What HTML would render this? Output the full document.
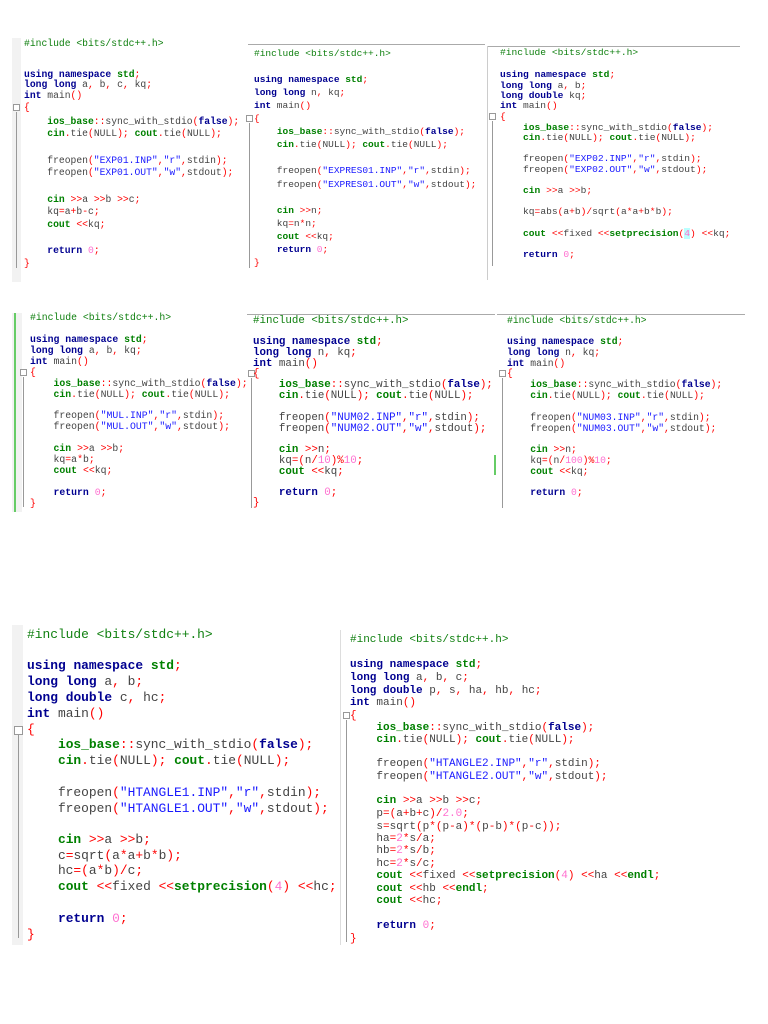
<!DOCTYPE html><html><head><meta charset="utf-8"><style>
body{margin:0;width:768px;height:1024px;background:#fff;position:relative;overflow:hidden}
.P{position:absolute;background:#fff;font-family:"Liberation Mono",monospace;color:#444}
.L{position:absolute;white-space:pre;line-height:1;left:0}
b.k{color:#000090;font-weight:bold}b.g{color:#008000;font-weight:bold}
i{font-style:normal;color:#f00}em{font-style:normal;color:#1a1aff}u{text-decoration:none;color:#ff70d0}
.pp{color:#108010}
.gut{position:absolute;background:#f2f2f2}
.vl{position:absolute;width:1px;background:#999}
.fb{position:absolute;width:7px;height:7px;border:1px solid #999;background:#fff;box-sizing:border-box}
.hl{position:absolute;height:1px;background:#aaa}
</style></head><body>

<!-- panel 1 -->
<div class="gut" style="left:12px;top:38px;width:9px;height:244px"></div>
<div class="fb" style="left:13px;top:104px"></div><div class="vl" style="left:16px;top:112px;height:156px"></div>
<div class="P" style="left:24px;top:0;font-size:9.7px">
<div class="L pp" style="top:39px">#include &lt;bits/stdc++.h&gt;</div>
<div class="L" style="top:70px"><b class=k>using</b> <b class=k>namespace</b> <b class=g>std</b><i>;</i></div>
<div class="L" style="top:80px"><b class=k>long</b> <b class=k>long</b> a<i>,</i> b<i>,</i> c<i>,</i> kq<i>;</i></div>
<div class="L" style="top:91px"><b class=k>int</b> main<i>()</i></div>
<div class="L" style="top:103px"><i>{</i></div>
<div class="L" style="top:117px">    <b class=g>ios_base</b><i>::</i>sync_with_stdio<i>(</i><b class=k>false</b><i>);</i></div>
<div class="L" style="top:129px">    <b class=g>cin</b><i>.</i>tie<i>(</i>NULL<i>);</i> <b class=g>cout</b><i>.</i>tie<i>(</i>NULL<i>);</i></div>
<div class="L" style="top:156px">    freopen<i>(</i><em>"EXP01.INP"</em><i>,</i><em>"r"</em><i>,</i>stdin<i>);</i></div>
<div class="L" style="top:168px">    freopen<i>(</i><em>"EXP01.OUT"</em><i>,</i><em>"w"</em><i>,</i>stdout<i>);</i></div>
<div class="L" style="top:195px">    <b class=g>cin</b> <i>&gt;&gt;</i>a <i>&gt;&gt;</i>b <i>&gt;&gt;</i>c<i>;</i></div>
<div class="L" style="top:207px">    kq<i>=</i>a<i>+</i>b<i>-</i>c<i>;</i></div>
<div class="L" style="top:220px">    <b class=g>cout</b> <i>&lt;&lt;</i>kq<i>;</i></div>
<div class="L" style="top:246px">    <b class=k>return</b> <u>0</u><i>;</i></div>
<div class="L" style="top:259px"><i>}</i></div>
</div>

<!-- panel 2 -->
<div class="hl" style="left:248px;top:44px;width:237px"></div>
<div class="fb" style="left:246px;top:115px"></div><div class="vl" style="left:249px;top:123px;height:145px"></div>
<div class="P" style="left:254px;top:0;font-size:9.5px">
<div class="L pp" style="top:49px">#include &lt;bits/stdc++.h&gt;</div>
<div class="L" style="top:75px"><b class=k>using</b> <b class=k>namespace</b> <b class=g>std</b><i>;</i></div>
<div class="L" style="top:88px"><b class=k>long</b> <b class=k>long</b> n<i>,</i> kq<i>;</i></div>
<div class="L" style="top:101px"><b class=k>int</b> main<i>()</i></div>
<div class="L" style="top:114px"><i>{</i></div>
<div class="L" style="top:127px">    <b class=g>ios_base</b><i>::</i>sync_with_stdio<i>(</i><b class=k>false</b><i>);</i></div>
<div class="L" style="top:140px">    <b class=g>cin</b><i>.</i>tie<i>(</i>NULL<i>);</i> <b class=g>cout</b><i>.</i>tie<i>(</i>NULL<i>);</i></div>
<div class="L" style="top:166px">    freopen<i>(</i><em>"EXPRES01.INP"</em><i>,</i><em>"r"</em><i>,</i>stdin<i>);</i></div>
<div class="L" style="top:180px">    freopen<i>(</i><em>"EXPRES01.OUT"</em><i>,</i><em>"w"</em><i>,</i>stdout<i>);</i></div>
<div class="L" style="top:206px">    <b class=g>cin</b> <i>&gt;&gt;</i>n<i>;</i></div>
<div class="L" style="top:219px">    kq<i>=</i>n<i>*</i>n<i>;</i></div>
<div class="L" style="top:232px">    <b class=g>cout</b> <i>&lt;&lt;</i>kq<i>;</i></div>
<div class="L" style="top:245px">    <b class=k>return</b> <u>0</u><i>;</i></div>
<div class="L" style="top:258px"><i>}</i></div>
</div>

<!-- panel 3 -->
<div class="hl" style="left:487px;top:46px;width:253px"></div>
<div class="vl" style="left:487px;top:46px;height:234px;background:#ccc"></div>
<div class="fb" style="left:489px;top:113px"></div><div class="vl" style="left:492px;top:121px;height:145px"></div>
<div class="P" style="left:500px;top:0;font-size:9.6px">
<div class="L pp" style="top:48px">#include &lt;bits/stdc++.h&gt;</div>
<div class="L" style="top:70px"><b class=k>using</b> <b class=k>namespace</b> <b class=g>std</b><i>;</i></div>
<div class="L" style="top:81px"><b class=k>long</b> <b class=k>long</b> a<i>,</i> b<i>;</i></div>
<div class="L" style="top:91px"><b class=k>long</b> <b class=k>double</b> kq<i>;</i></div>
<div class="L" style="top:101px"><b class=k>int</b> main<i>()</i></div>
<div class="L" style="top:112px"><i>{</i></div>
<div class="L" style="top:123px">    <b class=g>ios_base</b><i>::</i>sync_with_stdio<i>(</i><b class=k>false</b><i>);</i></div>
<div class="L" style="top:133px">    <b class=g>cin</b><i>.</i>tie<i>(</i>NULL<i>);</i> <b class=g>cout</b><i>.</i>tie<i>(</i>NULL<i>);</i></div>
<div class="L" style="top:154px">    freopen<i>(</i><em>"EXP02.INP"</em><i>,</i><em>"r"</em><i>,</i>stdin<i>);</i></div>
<div class="L" style="top:165px">    freopen<i>(</i><em>"EXP02.OUT"</em><i>,</i><em>"w"</em><i>,</i>stdout<i>);</i></div>
<div class="L" style="top:186px">    <b class=g>cin</b> <i>&gt;&gt;</i>a <i>&gt;&gt;</i>b<i>;</i></div>
<div class="L" style="top:207px">    kq<i>=</i>abs<i>(</i>a<i>+</i>b<i>)/</i>sqrt<i>(</i>a<i>*</i>a<i>+</i>b<i>*</i>b<i>);</i></div>
<div class="L" style="top:229px">    <b class=g>cout</b> <i>&lt;&lt;</i>fixed <i>&lt;&lt;</i><b class=g>setprecision</b><i>(</i><u style="background:#bff">4</u><i>)</i> <i>&lt;&lt;</i>kq<i>;</i></div>
<div class="L" style="top:250px">    <b class=k>return</b> <u>0</u><i>;</i></div>
</div>

<!-- panel 4 -->
<div class="gut" style="left:12px;top:313px;width:10px;height:199px"></div>
<div class="vl" style="left:14px;top:313px;height:199px;width:2px;background:#6c6"></div>
<div class="fb" style="left:20px;top:369px"></div><div class="vl" style="left:23px;top:377px;height:130px"></div>
<div class="P" style="left:30px;top:0;font-size:9.8px">
<div class="L pp" style="top:313px">#include &lt;bits/stdc++.h&gt;</div>
<div class="L" style="top:335px"><b class=k>using</b> <b class=k>namespace</b> <b class=g>std</b><i>;</i></div>
<div class="L" style="top:346px"><b class=k>long</b> <b class=k>long</b> a<i>,</i> b<i>,</i> kq<i>;</i></div>
<div class="L" style="top:357px"><b class=k>int</b> main<i>()</i></div>
<div class="L" style="top:368px"><i>{</i></div>
<div class="L" style="top:379px">    <b class=g>ios_base</b><i>::</i>sync_with_stdio<i>(</i><b class=k>false</b><i>);</i></div>
<div class="L" style="top:390px">    <b class=g>cin</b><i>.</i>tie<i>(</i>NULL<i>);</i> <b class=g>cout</b><i>.</i>tie<i>(</i>NULL<i>);</i></div>
<div class="L" style="top:411px">    freopen<i>(</i><em>"MUL.INP"</em><i>,</i><em>"r"</em><i>,</i>stdin<i>);</i></div>
<div class="L" style="top:422px">    freopen<i>(</i><em>"MUL.OUT"</em><i>,</i><em>"w"</em><i>,</i>stdout<i>);</i></div>
<div class="L" style="top:444px">    <b class=g>cin</b> <i>&gt;&gt;</i>a <i>&gt;&gt;</i>b<i>;</i></div>
<div class="L" style="top:455px">    kq<i>=</i>a<i>*</i>b<i>;</i></div>
<div class="L" style="top:466px">    <b class=g>cout</b> <i>&lt;&lt;</i>kq<i>;</i></div>
<div class="L" style="top:488px">    <b class=k>return</b> <u>0</u><i>;</i></div>
<div class="L" style="top:499px"><i>}</i></div>
</div>

<!-- panel 5 -->
<div class="hl" style="left:247px;top:314px;width:248px"></div>
<div class="fb" style="left:248px;top:370px"></div><div class="vl" style="left:251px;top:378px;height:130px"></div>
<div class="P" style="left:253px;top:0;font-size:10.8px">
<div class="L pp" style="top:316px">#include &lt;bits/stdc++.h&gt;</div>
<div class="L" style="top:337px"><b class=k>using</b> <b class=k>namespace</b> <b class=g>std</b><i>;</i></div>
<div class="L" style="top:348px"><b class=k>long</b> <b class=k>long</b> n<i>,</i> kq<i>;</i></div>
<div class="L" style="top:359px"><b class=k>int</b> main<i>()</i></div>
<div class="L" style="top:369px"><i>{</i></div>
<div class="L" style="top:380px">    <b class=g>ios_base</b><i>::</i>sync_with_stdio<i>(</i><b class=k>false</b><i>);</i></div>
<div class="L" style="top:391px">    <b class=g>cin</b><i>.</i>tie<i>(</i>NULL<i>);</i> <b class=g>cout</b><i>.</i>tie<i>(</i>NULL<i>);</i></div>
<div class="L" style="top:413px">    freopen<i>(</i><em>"NUM02.INP"</em><i>,</i><em>"r"</em><i>,</i>stdin<i>);</i></div>
<div class="L" style="top:424px">    freopen<i>(</i><em>"NUM02.OUT"</em><i>,</i><em>"w"</em><i>,</i>stdout<i>);</i></div>
<div class="L" style="top:445px">    <b class=g>cin</b> <i>&gt;&gt;</i>n<i>;</i></div>
<div class="L" style="top:456px">    kq<i>=(</i>n<i>/</i><u>10</u><i>)%</i><u>10</u><i>;</i></div>
<div class="L" style="top:467px">    <b class=g>cout</b> <i>&lt;&lt;</i>kq<i>;</i></div>
<div class="L" style="top:488px">    <b class=k>return</b> <u>0</u><i>;</i></div>
<div class="L" style="top:498px"><i>}</i></div>
</div>

<!-- panel 6 -->
<div class="hl" style="left:497px;top:314px;width:248px"></div>
<div class="vl" style="left:494px;top:455px;height:20px;width:2px;background:#6c6"></div>
<div class="fb" style="left:499px;top:370px"></div><div class="vl" style="left:502px;top:378px;height:130px"></div>
<div class="P" style="left:507px;top:0;font-size:9.7px">
<div class="L pp" style="top:316px">#include &lt;bits/stdc++.h&gt;</div>
<div class="L" style="top:337px"><b class=k>using</b> <b class=k>namespace</b> <b class=g>std</b><i>;</i></div>
<div class="L" style="top:348px"><b class=k>long</b> <b class=k>long</b> n<i>,</i> kq<i>;</i></div>
<div class="L" style="top:359px"><b class=k>int</b> main<i>()</i></div>
<div class="L" style="top:369px"><i>{</i></div>
<div class="L" style="top:380px">    <b class=g>ios_base</b><i>::</i>sync_with_stdio<i>(</i><b class=k>false</b><i>);</i></div>
<div class="L" style="top:391px">    <b class=g>cin</b><i>.</i>tie<i>(</i>NULL<i>);</i> <b class=g>cout</b><i>.</i>tie<i>(</i>NULL<i>);</i></div>
<div class="L" style="top:413px">    freopen<i>(</i><em>"NUM03.INP"</em><i>,</i><em>"r"</em><i>,</i>stdin<i>);</i></div>
<div class="L" style="top:424px">    freopen<i>(</i><em>"NUM03.OUT"</em><i>,</i><em>"w"</em><i>,</i>stdout<i>);</i></div>
<div class="L" style="top:445px">    <b class=g>cin</b> <i>&gt;&gt;</i>n<i>;</i></div>
<div class="L" style="top:456px">    kq<i>=(</i>n<i>/</i><u>100</u><i>)%</i><u>10</u><i>;</i></div>
<div class="L" style="top:467px">    <b class=g>cout</b> <i>&lt;&lt;</i>kq<i>;</i></div>
<div class="L" style="top:488px">    <b class=k>return</b> <u>0</u><i>;</i></div>
</div>

<!-- panel 7 -->
<div class="gut" style="left:12px;top:625px;width:11px;height:320px"></div>
<div class="fb" style="left:14px;top:726px;width:9px;height:9px"></div><div class="vl" style="left:18px;top:735px;height:203px"></div>
<div class="P" style="left:27px;top:0;font-size:12.9px">
<div class="L pp" style="top:629px">#include &lt;bits/stdc++.h&gt;</div>
<div class="L" style="top:660px"><b class=k>using</b> <b class=k>namespace</b> <b class=g>std</b><i>;</i></div>
<div class="L" style="top:676px"><b class=k>long</b> <b class=k>long</b> a<i>,</i> b<i>;</i></div>
<div class="L" style="top:692px"><b class=k>long</b> <b class=k>double</b> c<i>,</i> hc<i>;</i></div>
<div class="L" style="top:708px"><b class=k>int</b> main<i>()</i></div>
<div class="L" style="top:724px"><i>{</i></div>
<div class="L" style="top:739px">    <b class=g>ios_base</b><i>::</i>sync_with_stdio<i>(</i><b class=k>false</b><i>);</i></div>
<div class="L" style="top:755px">    <b class=g>cin</b><i>.</i>tie<i>(</i>NULL<i>);</i> <b class=g>cout</b><i>.</i>tie<i>(</i>NULL<i>);</i></div>
<div class="L" style="top:787px">    freopen<i>(</i><em>"HTANGLE1.INP"</em><i>,</i><em>"r"</em><i>,</i>stdin<i>);</i></div>
<div class="L" style="top:803px">    freopen<i>(</i><em>"HTANGLE1.OUT"</em><i>,</i><em>"w"</em><i>,</i>stdout<i>);</i></div>
<div class="L" style="top:834px">    <b class=g>cin</b> <i>&gt;&gt;</i>a <i>&gt;&gt;</i>b<i>;</i></div>
<div class="L" style="top:850px">    c<i>=</i>sqrt<i>(</i>a<i>*</i>a<i>+</i>b<i>*</i>b<i>);</i></div>
<div class="L" style="top:865px">    hc<i>=(</i>a<i>*</i>b<i>)/</i>c<i>;</i></div>
<div class="L" style="top:881px">    <b class=g>cout</b> <i>&lt;&lt;</i>fixed <i>&lt;&lt;</i><b class=g>setprecision</b><i>(</i><u>4</u><i>)</i> <i>&lt;&lt;</i>hc<i>;</i></div>
<div class="L" style="top:913px">    <b class=k>return</b> <u>0</u><i>;</i></div>
<div class="L" style="top:929px"><i>}</i></div>
</div>

<!-- panel 8 -->
<div class="vl" style="left:340px;top:630px;height:315px;background:#ddd"></div>
<div class="fb" style="left:343px;top:712px"></div><div class="vl" style="left:346px;top:720px;height:222px"></div>
<div class="P" style="left:350px;top:0;font-size:11px">
<div class="L pp" style="top:635px">#include &lt;bits/stdc++.h&gt;</div>
<div class="L" style="top:660px"><b class=k>using</b> <b class=k>namespace</b> <b class=g>std</b><i>;</i></div>
<div class="L" style="top:673px"><b class=k>long</b> <b class=k>long</b> a<i>,</i> b<i>,</i> c<i>;</i></div>
<div class="L" style="top:686px"><b class=k>long</b> <b class=k>double</b> p<i>,</i> s<i>,</i> ha<i>,</i> hb<i>,</i> hc<i>;</i></div>
<div class="L" style="top:698px"><b class=k>int</b> main<i>()</i></div>
<div class="L" style="top:711px"><i>{</i></div>
<div class="L" style="top:723px">    <b class=g>ios_base</b><i>::</i>sync_with_stdio<i>(</i><b class=k>false</b><i>);</i></div>
<div class="L" style="top:735px">    <b class=g>cin</b><i>.</i>tie<i>(</i>NULL<i>);</i> <b class=g>cout</b><i>.</i>tie<i>(</i>NULL<i>);</i></div>
<div class="L" style="top:759px">    freopen<i>(</i><em>"HTANGLE2.INP"</em><i>,</i><em>"r"</em><i>,</i>stdin<i>);</i></div>
<div class="L" style="top:772px">    freopen<i>(</i><em>"HTANGLE2.OUT"</em><i>,</i><em>"w"</em><i>,</i>stdout<i>);</i></div>
<div class="L" style="top:796px">    <b class=g>cin</b> <i>&gt;&gt;</i>a <i>&gt;&gt;</i>b <i>&gt;&gt;</i>c<i>;</i></div>
<div class="L" style="top:809px">    p<i>=(</i>a<i>+</i>b<i>+</i>c<i>)/</i><u>2.0</u><i>;</i></div>
<div class="L" style="top:822px">    s<i>=</i>sqrt<i>(</i>p<i>*(</i>p<i>-</i>a<i>)*(</i>p<i>-</i>b<i>)*(</i>p<i>-</i>c<i>));</i></div>
<div class="L" style="top:834px">    ha<i>=</i><u>2</u><i>*</i>s<i>/</i>a<i>;</i></div>
<div class="L" style="top:846px">    hb<i>=</i><u>2</u><i>*</i>s<i>/</i>b<i>;</i></div>
<div class="L" style="top:859px">    hc<i>=</i><u>2</u><i>*</i>s<i>/</i>c<i>;</i></div>
<div class="L" style="top:871px">    <b class=g>cout</b> <i>&lt;&lt;</i>fixed <i>&lt;&lt;</i><b class=g>setprecision</b><i>(</i><u>4</u><i>)</i> <i>&lt;&lt;</i>ha <i>&lt;&lt;</i><b class=g>endl</b><i>;</i></div>
<div class="L" style="top:884px">    <b class=g>cout</b> <i>&lt;&lt;</i>hb <i>&lt;&lt;</i><b class=g>endl</b><i>;</i></div>
<div class="L" style="top:896px">    <b class=g>cout</b> <i>&lt;&lt;</i>hc<i>;</i></div>
<div class="L" style="top:921px">    <b class=k>return</b> <u>0</u><i>;</i></div>
<div class="L" style="top:934px"><i>}</i></div>
</div>
</body></html>
